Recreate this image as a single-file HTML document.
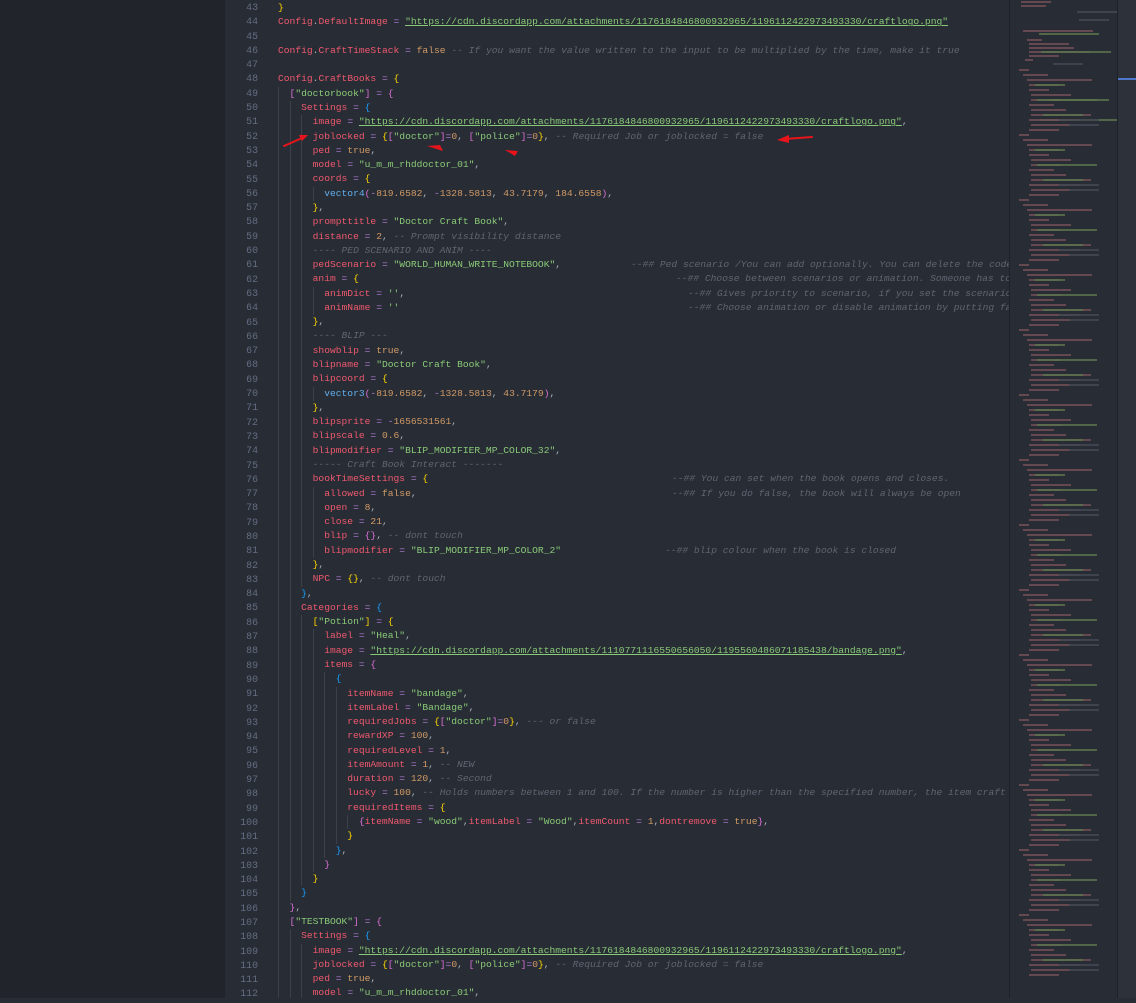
<!DOCTYPE html>
<html><head><meta charset="utf-8"><style>
html,body{margin:0;padding:0;width:1136px;height:998px;overflow:hidden;background:#282c34}
#side{position:absolute;left:0;top:0;width:225px;height:998px;background:#21252b}
#gut{position:absolute;left:225px;top:1px;width:33px;text-align:right;font:9.9px/14.29px "Liberation Mono",monospace;color:#636d83}
#code{position:absolute;left:278px;top:1px;width:731px;height:997px;overflow:hidden;font:9.65px/14.29px "Liberation Mono",monospace;color:#abb2bf}
.l{position:relative;height:14.29px;white-space:pre}
i{display:inline-block;width:2ch;height:14.29px;vertical-align:top;box-shadow:inset 1px 0 #3b404a;font-style:normal}
.k{color:#ef596f}.s{color:#89ca78}.n{color:#d19a66}.c{color:#5f6672;font-style:italic}.o{color:#b57edc}
.y{color:#ffd700}.m{color:#da70d6}.b{color:#179fff}.f{color:#61afef}.u{text-decoration:underline;text-decoration-color:#89ca78}
.a{position:absolute;top:0}
#mini{position:absolute;left:1009px;top:0;width:108px;height:998px;background:#282c34;box-shadow:inset 1px 0 #1e2127}
#sb{position:absolute;left:1117px;top:0;width:19px;height:998px;background:#2c313a;box-shadow:inset 1px 0 #1e2127}
</style></head><body>
<div id="side"></div>
<div id="gut"><div>43</div><div>44</div><div>45</div><div>46</div><div>47</div><div>48</div><div>49</div><div>50</div><div>51</div><div>52</div><div>53</div><div>54</div><div>55</div><div>56</div><div>57</div><div>58</div><div>59</div><div>60</div><div>61</div><div>62</div><div>63</div><div>64</div><div>65</div><div>66</div><div>67</div><div>68</div><div>69</div><div>70</div><div>71</div><div>72</div><div>73</div><div>74</div><div>75</div><div>76</div><div>77</div><div>78</div><div>79</div><div>80</div><div>81</div><div>82</div><div>83</div><div>84</div><div>85</div><div>86</div><div>87</div><div>88</div><div>89</div><div>90</div><div>91</div><div>92</div><div>93</div><div>94</div><div>95</div><div>96</div><div>97</div><div>98</div><div>99</div><div>100</div><div>101</div><div>102</div><div>103</div><div>104</div><div>105</div><div>106</div><div>107</div><div>108</div><div>109</div><div>110</div><div>111</div><div>112</div></div>
<div id="code">
<div class="l"><span class="y">}</span></div>
<div class="l"><span class="k">Config</span>.<span class="k">DefaultImage</span> <span class="o">=</span> <span class="s u">"https://cdn.discordapp.com/attachments/1176184846800932965/1196112422973493330/craftlogo.png"</span></div>
<div class="l"></div>
<div class="l"><span class="k">Config</span>.<span class="k">CraftTimeStack</span> <span class="o">=</span> <span class="n">false</span> <span class="c">-- If you want the value written to the input to be multiplied by the time, make it true</span></div>
<div class="l"></div>
<div class="l"><span class="k">Config</span>.<span class="k">CraftBooks</span> <span class="o">=</span> <span class="y">{</span></div>
<div class="l"><i></i><span class="m">[</span><span class="s">"doctorbook"</span><span class="m">]</span> <span class="o">=</span> <span class="m">{</span></div>
<div class="l"><i></i><i></i><span class="k">Settings</span> <span class="o">=</span> <span class="b">{</span></div>
<div class="l"><i></i><i></i><i></i><span class="k">image</span> <span class="o">=</span> <span class="s u">"https://cdn.discordapp.com/attachments/1176184846800932965/1196112422973493330/craftlogo.png"</span>,</div>
<div class="l"><i></i><i></i><i></i><span class="k">joblocked</span> <span class="o">=</span> <span class="y">{</span><span class="m">[</span><span class="s">"doctor"</span><span class="m">]</span><span class="o">=</span><span class="n">0</span>, <span class="m">[</span><span class="s">"police"</span><span class="m">]</span><span class="o">=</span><span class="n">0</span><span class="y">}</span>, <span class="c">-- Required Job or joblocked = false</span></div>
<div class="l"><i></i><i></i><i></i><span class="k">ped</span> <span class="o">=</span> <span class="n">true</span>,</div>
<div class="l"><i></i><i></i><i></i><span class="k">model</span> <span class="o">=</span> <span class="s">"u_m_m_rhddoctor_01"</span>,</div>
<div class="l"><i></i><i></i><i></i><span class="k">coords</span> <span class="o">=</span> <span class="y">{</span></div>
<div class="l"><i></i><i></i><i></i><i></i><span class="f">vector4</span><span class="m">(</span><span class="o">-</span><span class="n">819.6582</span>, <span class="o">-</span><span class="n">1328.5813</span>, <span class="n">43.7179</span>, <span class="n">184.6558</span><span class="m">)</span>,</div>
<div class="l"><i></i><i></i><i></i><span class="y">}</span>,</div>
<div class="l"><i></i><i></i><i></i><span class="k">prompttitle</span> <span class="o">=</span> <span class="s">"Doctor Craft Book"</span>,</div>
<div class="l"><i></i><i></i><i></i><span class="k">distance</span> <span class="o">=</span> <span class="n">2</span>, <span class="c">-- Prompt visibility distance</span></div>
<div class="l"><i></i><i></i><i></i><span class="c">---- PED SCENARIO AND ANİM ----</span></div>
<div class="l"><i></i><i></i><i></i><span class="k">pedScenario</span> <span class="o">=</span> <span class="s">"WORLD_HUMAN_WRITE_NOTEBOOK"</span>,<span class="c a" style="left:353px">--## Ped scenario /You can add optionally. You can delete the code</span></div>
<div class="l"><i></i><i></i><i></i><span class="k">anim</span> <span class="o">=</span> <span class="y">{</span><span class="c a" style="left:398px">--## Choose between scenarios or animation. Someone has to</span></div>
<div class="l"><i></i><i></i><i></i><i></i><span class="k">animDict</span> <span class="o">=</span> <span class="s">''</span>,<span class="c a" style="left:410px">--## Gives priority to scenario, if you set the scenario</span></div>
<div class="l"><i></i><i></i><i></i><i></i><span class="k">animName</span> <span class="o">=</span> <span class="s">''</span><span class="c a" style="left:410px">--## Choose animation or disable animation by putting fa</span></div>
<div class="l"><i></i><i></i><i></i><span class="y">}</span>,</div>
<div class="l"><i></i><i></i><i></i><span class="c">---- BLIP ---</span></div>
<div class="l"><i></i><i></i><i></i><span class="k">showblip</span> <span class="o">=</span> <span class="n">true</span>,</div>
<div class="l"><i></i><i></i><i></i><span class="k">blipname</span> <span class="o">=</span> <span class="s">"Doctor Craft Book"</span>,</div>
<div class="l"><i></i><i></i><i></i><span class="k">blipcoord</span> <span class="o">=</span> <span class="y">{</span></div>
<div class="l"><i></i><i></i><i></i><i></i><span class="f">vector3</span><span class="m">(</span><span class="o">-</span><span class="n">819.6582</span>, <span class="o">-</span><span class="n">1328.5813</span>, <span class="n">43.7179</span><span class="m">)</span>,</div>
<div class="l"><i></i><i></i><i></i><span class="y">}</span>,</div>
<div class="l"><i></i><i></i><i></i><span class="k">blipsprite</span> <span class="o">=</span> <span class="o">-</span><span class="n">1656531561</span>,</div>
<div class="l"><i></i><i></i><i></i><span class="k">blipscale</span> <span class="o">=</span> <span class="n">0.6</span>,</div>
<div class="l"><i></i><i></i><i></i><span class="k">blipmodifier</span> <span class="o">=</span> <span class="s">"BLIP_MODIFIER_MP_COLOR_32"</span>,</div>
<div class="l"><i></i><i></i><i></i><span class="c">----- Craft Book Interact -------</span></div>
<div class="l"><i></i><i></i><i></i><span class="k">bookTimeSettings</span> <span class="o">=</span> <span class="y">{</span><span class="c a" style="left:394px">--## You can set when the book opens and closes.</span></div>
<div class="l"><i></i><i></i><i></i><i></i><span class="k">allowed</span> <span class="o">=</span> <span class="n">false</span>,<span class="c a" style="left:394px">--## If you do false, the book will always be open</span></div>
<div class="l"><i></i><i></i><i></i><i></i><span class="k">open</span> <span class="o">=</span> <span class="n">8</span>,</div>
<div class="l"><i></i><i></i><i></i><i></i><span class="k">close</span> <span class="o">=</span> <span class="n">21</span>,</div>
<div class="l"><i></i><i></i><i></i><i></i><span class="k">blip</span> <span class="o">=</span> <span class="m">{}</span>, <span class="c">-- dont touch</span></div>
<div class="l"><i></i><i></i><i></i><i></i><span class="k">blipmodifier</span> <span class="o">=</span> <span class="s">"BLIP_MODIFIER_MP_COLOR_2"</span><span class="c a" style="left:387px">--## blip colour when the book is closed</span></div>
<div class="l"><i></i><i></i><i></i><span class="y">}</span>,</div>
<div class="l"><i></i><i></i><i></i><span class="k">NPC</span> <span class="o">=</span> <span class="y">{}</span>, <span class="c">-- dont touch</span></div>
<div class="l"><i></i><i></i><span class="b">}</span>,</div>
<div class="l"><i></i><i></i><span class="k">Categories</span> <span class="o">=</span> <span class="b">{</span></div>
<div class="l"><i></i><i></i><i></i><span class="y">[</span><span class="s">"Potion"</span><span class="y">]</span> <span class="o">=</span> <span class="y">{</span></div>
<div class="l"><i></i><i></i><i></i><i></i><span class="k">label</span> <span class="o">=</span> <span class="s">"Heal"</span>,</div>
<div class="l"><i></i><i></i><i></i><i></i><span class="k">image</span> <span class="o">=</span> <span class="s u">"https://cdn.discordapp.com/attachments/1110771116550656050/1195560486071185438/bandage.png"</span>,</div>
<div class="l"><i></i><i></i><i></i><i></i><span class="k">items</span> <span class="o">=</span> <span class="m">{</span></div>
<div class="l"><i></i><i></i><i></i><i></i><i></i><span class="b">{</span></div>
<div class="l"><i></i><i></i><i></i><i></i><i></i><i></i><span class="k">itemName</span> <span class="o">=</span> <span class="s">"bandage"</span>,</div>
<div class="l"><i></i><i></i><i></i><i></i><i></i><i></i><span class="k">itemLabel</span> <span class="o">=</span> <span class="s">"Bandage"</span>,</div>
<div class="l"><i></i><i></i><i></i><i></i><i></i><i></i><span class="k">requiredJobs</span> <span class="o">=</span> <span class="y">{</span><span class="m">[</span><span class="s">"doctor"</span><span class="m">]</span><span class="o">=</span><span class="n">0</span><span class="y">}</span>, <span class="c">--- or false</span></div>
<div class="l"><i></i><i></i><i></i><i></i><i></i><i></i><span class="k">rewardXP</span> <span class="o">=</span> <span class="n">100</span>,</div>
<div class="l"><i></i><i></i><i></i><i></i><i></i><i></i><span class="k">requiredLevel</span> <span class="o">=</span> <span class="n">1</span>,</div>
<div class="l"><i></i><i></i><i></i><i></i><i></i><i></i><span class="k">itemAmount</span> <span class="o">=</span> <span class="n">1</span>, <span class="c">-- NEW</span></div>
<div class="l"><i></i><i></i><i></i><i></i><i></i><i></i><span class="k">duration</span> <span class="o">=</span> <span class="n">120</span>, <span class="c">-- Second</span></div>
<div class="l"><i></i><i></i><i></i><i></i><i></i><i></i><span class="k">lucky</span> <span class="o">=</span> <span class="n">100</span>, <span class="c">-- Holds numbers between 1 and 100. If the number is higher than the specified number, the item craft</span></div>
<div class="l"><i></i><i></i><i></i><i></i><i></i><i></i><span class="k">requiredItems</span> <span class="o">=</span> <span class="y">{</span></div>
<div class="l"><i></i><i></i><i></i><i></i><i></i><i></i><i></i><span class="m">{</span><span class="k">itemName</span> <span class="o">=</span> <span class="s">"wood"</span>,<span class="k">itemLabel</span> <span class="o">=</span> <span class="s">"Wood"</span>,<span class="k">itemCount</span> <span class="o">=</span> <span class="n">1</span>,<span class="k">dontremove</span> <span class="o">=</span> <span class="n">true</span><span class="m">}</span>,</div>
<div class="l"><i></i><i></i><i></i><i></i><i></i><i></i><span class="y">}</span></div>
<div class="l"><i></i><i></i><i></i><i></i><i></i><span class="b">}</span>,</div>
<div class="l"><i></i><i></i><i></i><i></i><span class="m">}</span></div>
<div class="l"><i></i><i></i><i></i><span class="y">}</span></div>
<div class="l"><i></i><i></i><span class="b">}</span></div>
<div class="l"><i></i><span class="m">}</span>,</div>
<div class="l"><i></i><span class="m">[</span><span class="s">"TESTBOOK"</span><span class="m">]</span> <span class="o">=</span> <span class="m">{</span></div>
<div class="l"><i></i><i></i><span class="k">Settings</span> <span class="o">=</span> <span class="b">{</span></div>
<div class="l"><i></i><i></i><i></i><span class="k">image</span> <span class="o">=</span> <span class="s u">"https://cdn.discordapp.com/attachments/1176184846800932965/1196112422973493330/craftlogo.png"</span>,</div>
<div class="l"><i></i><i></i><i></i><span class="k">joblocked</span> <span class="o">=</span> <span class="y">{</span><span class="m">[</span><span class="s">"doctor"</span><span class="m">]</span><span class="o">=</span><span class="n">0</span>, <span class="m">[</span><span class="s">"police"</span><span class="m">]</span><span class="o">=</span><span class="n">0</span><span class="y">}</span>, <span class="c">-- Required Job or joblocked = false</span></div>
<div class="l"><i></i><i></i><i></i><span class="k">ped</span> <span class="o">=</span> <span class="n">true</span>,</div>
<div class="l"><i></i><i></i><i></i><span class="k">model</span> <span class="o">=</span> <span class="s">"u_m_m_rhddoctor_01"</span>,</div>
</div>
<div id="mini">
<svg width="108" height="998" xmlns="http://www.w3.org/2000/svg">
<g stroke-width="1.2">
<path d="M12 2h30M12 6h25M14 31h70M18 40h15M20 44h40M20 48h45M20 52h60M20 56h30M16 60h8" stroke="#8a5a62"/>
<path d="M30 34h60M32 52h70M40 100h60M30 120h90" stroke="#6b8a55"/>
<path d="M68 12h40M70 20h30M44 64h30" stroke="#4b515c"/>
</g>
<g id="blk" stroke-width="1.2">
<path d="M10 70h10M14 75h25M18 80h65M20 85h30M20 90h20M22 95h40M22 100h30M20 105h25M22 110h35M22 115h60M20 120h50M22 125h40M20 130h30" stroke="#8a5a62"/>
<path d="M26 85h30M28 100h60M34 115h40" stroke="#6b8a55"/>
<path d="M50 120h40M60 125h30" stroke="#4b515c"/>
</g>
<use href="#blk" y="65"/><use href="#blk" y="130"/><use href="#blk" y="195"/><use href="#blk" y="260"/><use href="#blk" y="325"/><use href="#blk" y="390"/><use href="#blk" y="455"/><use href="#blk" y="520"/><use href="#blk" y="585"/><use href="#blk" y="650"/><use href="#blk" y="715"/><use href="#blk" y="780"/><use href="#blk" y="845"/>
</svg>
</div>
<div id="sb"><div style="position:absolute;left:1px;top:78px;width:18px;height:2px;background:#4d78cc"></div></div>
<svg style="position:absolute;left:0;top:0" width="1136" height="998" xmlns="http://www.w3.org/2000/svg">
<g stroke="#e8141c" fill="#e8141c" stroke-width="2" stroke-linecap="round">
<line x1="284" y1="146" x2="302" y2="138"/><polygon points="308,135 299,135 302,141" stroke="none"/>
<polygon points="427,146 440,145 443,151" stroke="none"/>
<polygon points="505,150 518,151 515,156" stroke="none"/>
<line x1="812" y1="137" x2="785" y2="139"/><polygon points="777,140 789,135 789,143" stroke="none"/>
</g>
</svg>
</body></html>
